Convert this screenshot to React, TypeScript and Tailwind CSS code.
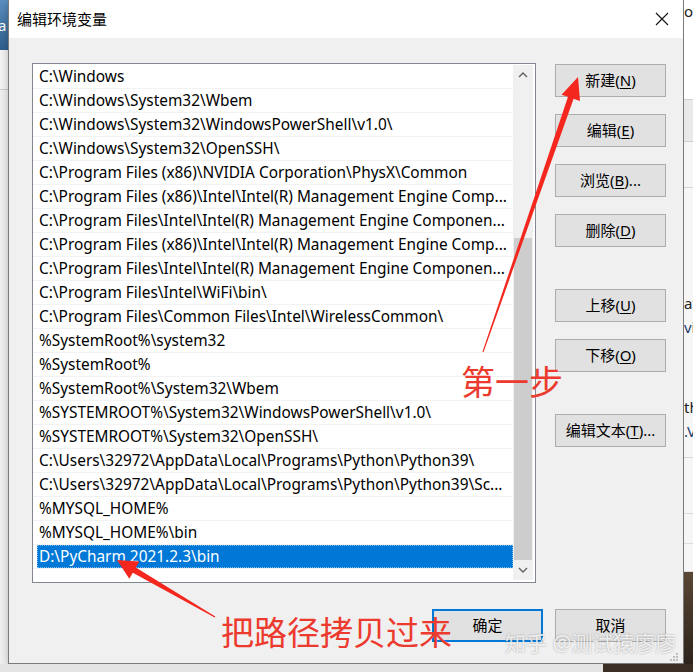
import React from "react";

const paths = [
  "C:\\Windows",
  "C:\\Windows\\System32\\Wbem",
  "C:\\Windows\\System32\\WindowsPowerShell\\v1.0\\",
  "C:\\Windows\\System32\\OpenSSH\\",
  "C:\\Program Files (x86)\\NVIDIA Corporation\\PhysX\\Common",
  "C:\\Program Files (x86)\\Intel\\Intel(R) Management Engine Comp...",
  "C:\\Program Files\\Intel\\Intel(R) Management Engine Componen...",
  "C:\\Program Files (x86)\\Intel\\Intel(R) Management Engine Comp...",
  "C:\\Program Files\\Intel\\Intel(R) Management Engine Componen...",
  "C:\\Program Files\\Intel\\WiFi\\bin\\",
  "C:\\Program Files\\Common Files\\Intel\\WirelessCommon\\",
  "%SystemRoot%\\system32",
  "%SystemRoot%",
  "%SystemRoot%\\System32\\Wbem",
  "%SYSTEMROOT%\\System32\\WindowsPowerShell\\v1.0\\",
  "%SYSTEMROOT%\\System32\\OpenSSH\\",
  "C:\\Users\\32972\\AppData\\Local\\Programs\\Python\\Python39\\",
  "C:\\Users\\32972\\AppData\\Local\\Programs\\Python\\Python39\\Sc...",
  "%MYSQL_HOME%",
  "%MYSQL_HOME%\\bin",
  "D:\\PyCharm 2021.2.3\\bin",
];

const SELECTED = paths.length - 1;

// label, accelerator key, suffix, extra top margin
const sideButtons: { pre: string; key: string; post: string; mt: string }[] = [
  { pre: "新建(", key: "N", post: ")", mt: "mt-0" },
  { pre: "编辑(", key: "E", post: ")", mt: "mt-[17px]" },
  { pre: "浏览(", key: "B", post: ")...", mt: "mt-[17px]" },
  { pre: "删除(", key: "D", post: ")", mt: "mt-[17px]" },
  { pre: "上移(", key: "U", post: ")", mt: "mt-[42px]" },
  { pre: "下移(", key: "O", post: ")", mt: "mt-[17px]" },
  { pre: "编辑文本(", key: "T", post: ")...", mt: "mt-[42px]" },
];

const font = { fontFamily: '"Noto Sans", "Noto Sans CJK SC", sans-serif' };

function WinButton({ children, primary, className = "" }: { children: React.ReactNode; primary?: boolean; className?: string }) {
  return (
    <button
      className={
        "w-[111px] h-[33px] flex items-center justify-center text-[15px] text-black bg-[#e1e1e1] " +
        (primary ? "border-2 border-[#0078d7] " : "border border-[#adadad] ") +
        className
      }
    >
      {children}
    </button>
  );
}

function Chevron({ down }: { down?: boolean }) {
  return (
    <svg width="10" height="6" viewBox="0 0 10 6" className={down ? "" : "rotate-180"}>
      <path d="M1 1 L5 5 L9 1" fill="none" stroke="#606060" strokeWidth="1.4" />
    </svg>
  );
}

function PathList() {
  return (
    <div className="w-[504px] h-[520px] border border-[#828790] bg-white flex pt-[1px]">
      <div className="flex-1 min-w-0 flex flex-col">
        {paths.map((p, i) => (
          <div key={i} className="h-[24px] shrink-0 border-b border-[#f2f2f2] pl-[4px]">
            <div
              className={
                "h-full flex items-center pl-[2px] pr-[3px] pt-[1px] whitespace-nowrap overflow-hidden text-[15.4px] " +
                (i === SELECTED
                  ? "bg-[#0078d7] text-white outline-1 outline-dotted outline-[#7fb8ea] -outline-offset-1"
                  : "text-black")
              }
            >
              {p}
            </div>
          </div>
        ))}
      </div>
      <div className="w-[20px] mr-[2px] mb-[2px] bg-[#f0f0f0] flex flex-col">
        <div className="h-[20px] flex items-center justify-center">
          <Chevron />
        </div>
        <div className="flex-1 flex flex-col pt-[153px] px-[1px]">
          <div className="h-[322px] bg-[#cdcdcd]" />
        </div>
        <div className="h-[20px] flex items-center justify-center">
          <Chevron down />
        </div>
      </div>
    </div>
  );
}

function Dialog() {
  return (
    <div className="w-[676px] flex flex-col border-x border-b border-[#7a7a7a] shadow-[0_2px_8px_rgba(0,0,0,0.25)]">
      <div className="h-[38px] bg-white flex items-center justify-between pl-[8px] pr-[14px]">
        <span className="text-[15px] text-black" style={font}>编辑环境变量</span>
        <svg width="14" height="14" viewBox="0 0 14 14">
          <path d="M1 1 L13 13 M13 1 L1 13" stroke="#111" strokeWidth="1.1" />
        </svg>
      </div>
      <div className="flex-1 bg-[#f0f0f0] pt-[25px] pl-[23px] pr-[17px] flex flex-col" style={font}>
        <div className="flex gap-[19px]">
          <PathList />
          <div className="flex flex-col pt-[1px]">
            {sideButtons.map((b) => (
              <WinButton key={b.key} className={b.mt}>
                {b.pre}
                <span className="underline underline-offset-2">{b.key}</span>
                {b.post}
              </WinButton>
            ))}
          </div>
        </div>
        <div className="flex justify-end gap-[12px] mt-[26px]">
          <WinButton primary>确定</WinButton>
          <WinButton>取消</WinButton>
        </div>
        <div className="flex justify-end h-[21px] items-end pb-[2px] -mr-[12px]">
          <div className="grid grid-cols-3 gap-[1px]">
            <span />
            <span />
            <span className="w-[2px] h-[2px] bg-[#bdbdbd]" />
            <span />
            <span className="w-[2px] h-[2px] bg-[#bdbdbd]" />
            <span className="w-[2px] h-[2px] bg-[#bdbdbd]" />
            <span className="w-[2px] h-[2px] bg-[#bdbdbd]" />
            <span className="w-[2px] h-[2px] bg-[#bdbdbd]" />
            <span className="w-[2px] h-[2px] bg-[#bdbdbd]" />
          </div>
        </div>
      </div>
    </div>
  );
}

export default function App() {
  return (
    <div className="relative w-[693px] h-[672px] overflow-hidden flex flex-col bg-[#e6e6e6]" style={font}>
      <div className="flex h-[664px]">
        {/* desktop behind the dialog, left edge */}
        <div className="w-[8px] flex flex-col overflow-hidden text-[15px] leading-none">
          <div className="h-[50px] bg-gradient-to-b from-[#5b8fc0] to-[#2f5f8e] text-white pt-[18px] -ml-[2px] whitespace-nowrap">
            a
          </div>
          <div className="h-[40px] bg-[#f3f3f3] border-b border-[#cfcfcf]" />
          <div className="flex-1 bg-[#f0f0f0]" />
        </div>
        <Dialog />
        {/* desktop behind the dialog, right edge */}
        <div className="flex-1 flex flex-col bg-[#f6f6f6] overflow-hidden text-[15px] leading-none whitespace-nowrap text-[#222]">
          <div className="h-[100px] bg-white border-b border-[#d0d0d0] pt-[4px]">of</div>
          <div className="h-[42px] bg-[#e9e9e9] border-b border-[#d0d0d0]" />
          <div className="h-[46px] border-b border-[#d6d6d6]" />
          <div className="h-[270px] border-b border-[#d6d6d6] pt-[108px] flex flex-col gap-[9px]">
            <span>at</span>
            <span className="text-[#1a3c6e]">vi</span>
            <span className="mt-[56px]">th</span>
            <span className="text-[#1a3c6e]">.V</span>
          </div>
          <div className="h-[56px] border-b border-[#dcdcdc]" />
          <div className="h-[30px] border-b border-[#dcdcdc]" />
          <div className="h-[28px] border-b border-[#dcdcdc]" />
          <div className="flex-1 bg-gradient-to-b from-[#5a4634] to-[#2d241c]" />
        </div>
      </div>
      <div className="flex-1 flex">
        <div className="w-[603px] bg-[#e4e4e4]" />
        <div className="flex-1 bg-[#3b2f25]" />
      </div>

      {/* annotations drawn over the screenshot */}
      <svg className="absolute inset-0 pointer-events-none" width="693" height="672">
        <polygon
          points="483.5,352.2 573.6,98.8 580,101 578,77 561.6,94.7 568,96.8 482.5,351.8"
          fill="#f3271e"
        />
        <polygon
          points="215.3,616.6 135.8,567.5 139.3,561.6 117,560 129.3,578.8 132.8,572.7 214.7,617.4"
          fill="#f3271e"
        />
      </svg>
      <span className="absolute left-[461px] top-[365px] text-[34px] leading-none text-[#ec3a2e]" style={font}>
        第一步
      </span>
      <span className="absolute left-[221px] top-[616px] text-[33px] leading-none text-[#ec3a2e]" style={font}>
        把路径拷贝过来
      </span>
      <span
        className="absolute left-[505px] top-[633px] text-[21px] leading-none text-white/80 [text-shadow:0_0_2px_rgba(0,0,0,0.35)]"
        style={font}
      >
        知乎 @测试猿廖廖
      </span>
    </div>
  );
}
